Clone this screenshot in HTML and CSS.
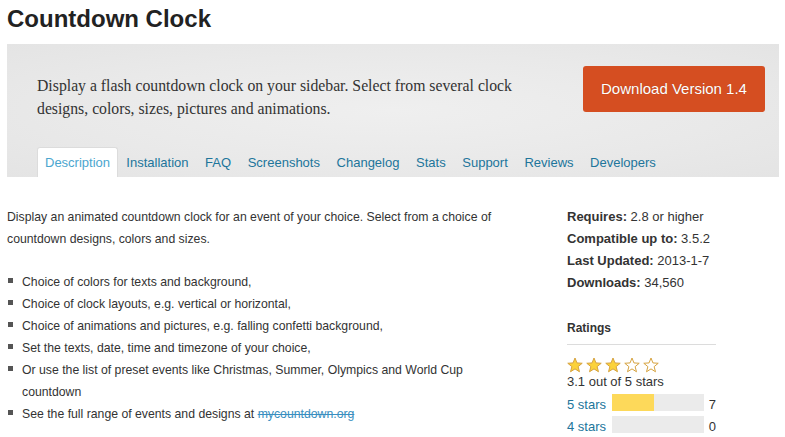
FILE: index.html
```html
<!DOCTYPE html>
<html lang="en">
<head>
<meta charset="utf-8">
<title>Countdown Clock</title>
<link rel="stylesheet" href="styles.css">
</head>
<body>
<div class="page">
  <h1 class="title">Countdown Clock</h1>
  <div class="banner">
    <div class="banner-top">
      <p class="tagline">Display a flash countdown clock on your sidebar. Select from several clock designs, colors, sizes, pictures and animations.</p>
      <a class="download" href="#">Download Version 1.4</a>
    </div>
    <nav class="tabs">
      <a class="tab active" href="#">Description</a>
      <a class="tab" href="#">Installation</a>
      <a class="tab" href="#">FAQ</a>
      <a class="tab" href="#">Screenshots</a>
      <a class="tab" href="#">Changelog</a>
      <a class="tab" href="#">Stats</a>
      <a class="tab" href="#">Support</a>
      <a class="tab" href="#">Reviews</a>
      <a class="tab" href="#">Developers</a>
    </nav>
  </div>
  <div class="content">
    <div class="main">
      <p class="intro">Display an animated countdown clock for an event of your choice. Select from a choice of countdown designs, colors and sizes.</p>
      <ul class="features">
        <li><span>Choice of colors for texts and background,</span></li>
        <li><span>Choice of clock layouts, e.g. vertical or horizontal,</span></li>
        <li><span>Choice of animations and pictures, e.g. falling confetti background,</span></li>
        <li><span>Set the texts, date, time and timezone of your choice,</span></li>
        <li><span>Or use the list of preset events like Christmas, Summer, Olympics and World Cup countdown</span></li>
        <li><span>See the full range of events and designs at <a class="struck" href="#">mycountdown.org</a></span></li>
      </ul>
    </div>
    <aside class="sidebar">
      <ul class="meta">
        <li><strong>Requires:</strong> 2.8 or higher</li>
        <li><strong>Compatible up to:</strong> 3.5.2</li>
        <li><strong>Last Updated:</strong> 2013-1-7</li>
        <li><strong>Downloads:</strong> 34,560</li>
      </ul>
      <h4 class="ratings-title">Ratings</h4>
      <div class="stars">
        <svg class="star full" viewBox="0 0 16 16"><polygon points="8,1 9.94,5.93 15.23,6.25 11.14,9.62 12.47,14.75 8,11.9 3.53,14.75 4.86,9.62 0.77,6.25 6.06,5.93"/></svg>
        <svg class="star full" viewBox="0 0 16 16"><polygon points="8,1 9.94,5.93 15.23,6.25 11.14,9.62 12.47,14.75 8,11.9 3.53,14.75 4.86,9.62 0.77,6.25 6.06,5.93"/></svg>
        <svg class="star full" viewBox="0 0 16 16"><polygon points="8,1 9.94,5.93 15.23,6.25 11.14,9.62 12.47,14.75 8,11.9 3.53,14.75 4.86,9.62 0.77,6.25 6.06,5.93"/></svg>
        <svg class="star empty" viewBox="0 0 16 16"><polygon points="8,1 9.94,5.93 15.23,6.25 11.14,9.62 12.47,14.75 8,11.9 3.53,14.75 4.86,9.62 0.77,6.25 6.06,5.93"/></svg>
        <svg class="star empty" viewBox="0 0 16 16"><polygon points="8,1 9.94,5.93 15.23,6.25 11.14,9.62 12.47,14.75 8,11.9 3.53,14.75 4.86,9.62 0.77,6.25 6.06,5.93"/></svg>
      </div>
      <p class="rating-text">3.1 out of 5 stars</p>
      <div class="rating-row">
        <a href="#">5 stars</a>
        <span class="bar"><span class="fill" style="width:46%"></span></span>
        <span class="count">7</span>
      </div>
      <div class="rating-row">
        <a href="#">4 stars</a>
        <span class="bar"><span class="fill" style="width:0%"></span></span>
        <span class="count">0</span>
      </div>
    </aside>
  </div>
</div>
</body>
</html>
```

FILE: styles.css
```css
* { box-sizing: border-box; }

html, body {
  margin: 0;
  padding: 0;
  background: #fff;
}

body {
  font-family: "Liberation Sans", Arial, sans-serif;
  font-size: 13px;
  color: #333;
  overflow: hidden;
}

a { text-decoration: none; color: #21759b; }

.page {
  width: 772px;
  margin-left: 7px;
}

.title {
  margin: 4px 0 10px;
  font-size: 24px;
  line-height: 30px;
  font-weight: bold;
  color: #222;
}

.banner {
  background: radial-gradient(ellipse at 50% 50%, #efefef 0%, #e9e9e9 60%, #e4e4e4 100%);
  padding: 22px 14px 0 30px;
}

.banner-top {
  display: flex;
  align-items: flex-start;
}

.tagline {
  margin: 8px 0 0;
  width: 500px;
  font-family: "Liberation Serif", "Times New Roman", serif;
  font-size: 15.75px;
  line-height: 23px;
  color: #333;
}

.download {
  margin-left: auto;
  width: 182px;
  height: 46px;
  line-height: 46px;
  text-align: center;
  background: #d54e21;
  border-radius: 3px;
  color: #fff;
  font-size: 15px;
  text-shadow: 0 0 1px rgba(0,0,0,0.25);
}

.tabs {
  display: flex;
  margin-top: 27px;
}

.tab {
  display: block;
  padding: 0 7.3px;
  border: 1px solid transparent;
  border-bottom: 0;
  line-height: 29px;
  font-size: 13px;
  color: #21759b;
}

.tab.active {
  padding: 0 7px;
  background: #fff;
  border-color: #dcdcdc;
  border-radius: 3px 3px 0 0;
  color: #4ca6cf;
}

.content {
  display: flex;
  align-items: flex-start;
  margin-top: 29px;
}

.main {
  width: 515px;
  font-size: 12.25px;
}

.intro {
  margin: 0 0 21px;
  line-height: 22px;
}

.features {
  margin: 0;
  padding: 0;
  list-style: none;
  line-height: 22px;
}

.features li {
  display: grid;
  grid-template-columns: 15px 1fr;
}

.features li::before {
  content: "";
  width: 5px;
  height: 5px;
  margin: 7px 0 0 1px;
  background: #555;
}

.struck {
  text-decoration: line-through;
  color: #3a8fc0;
}

.sidebar {
  width: 149px;
  margin-left: 45px;
}

.meta {
  margin: 0;
  padding: 0;
  list-style: none;
  line-height: 22px;
}

.meta strong { color: #333; }

.ratings-title {
  margin: 23px 0 0;
  padding-bottom: 5px;
  border-bottom: 1px solid #dcdcdc;
  font-size: 12px;
  line-height: 22px;
  font-weight: bold;
}

.stars {
  display: flex;
  gap: 3px;
  margin-top: 12px;
  height: 16px;
}

.star {
  width: 16px;
  height: 16px;
  display: block;
}

.star polygon {
  stroke: #d6a340;
  stroke-width: 1;
  stroke-linejoin: round;
}

.star.full polygon { fill: #fbd23b; }
.star.empty polygon { fill: #fff; }

.rating-text {
  margin: 0;
  line-height: 18px;
}

.rating-row {
  display: grid;
  grid-template-columns: 45px 92px 1fr;
  line-height: 22px;
}

.rating-text + .rating-row { margin-top: 3px; }

.bar {
  align-self: start;
  height: 17px;
  background: #ebebeb;
  display: flex;
}

.fill {
  display: block;
  height: 100%;
  background: #fdd95a;
}

.count {
  text-align: right;
}
```
